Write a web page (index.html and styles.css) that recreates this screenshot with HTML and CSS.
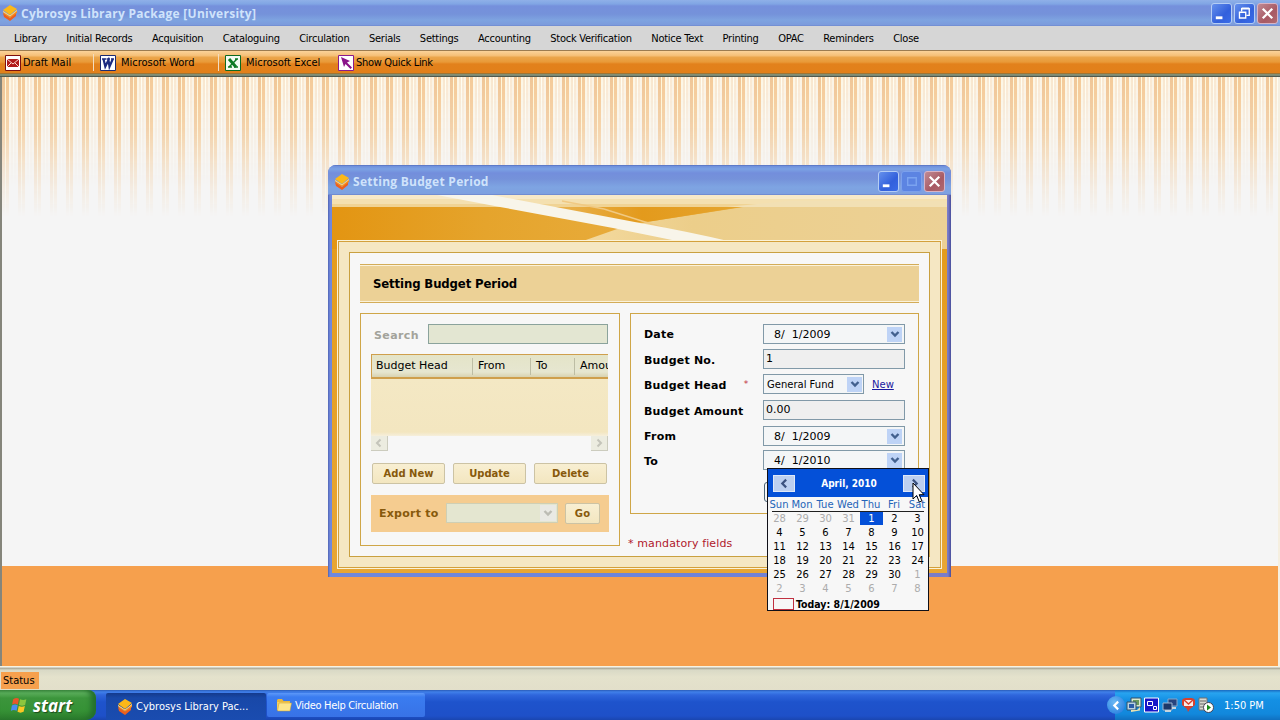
FILE: index.html
```html
<!DOCTYPE html>
<html lang="en">
<head>
    <meta charset="UTF-8">
    <meta name="viewport" content="width=device-width, initial-scale=1.0">
    <title>Cybrosys Library Package [University]</title>
    <link rel="stylesheet" href="styles.css">
</head>
<body>
    <!-- shared icons -->
    <svg class="defs" width="0" height="0">
        <symbol id="logo" viewBox="0 0 16 16">
            <path d="M1 8l7 5 6-6v4l-6 5-6-4z" fill="#ef5f1c"/>
            <path d="M1 6l7 5 7-6v3l-7 5-6-4z" fill="#f58a20"/>
            <path d="M1 6l7 4.500L15 5v1l-7 5.500L1 7z" fill="#ffe08a"/>
            <path d="M1 5l7-5 7 4-7 6z" fill="#fcb818"/>
        </symbol>
        <symbol id="min" viewBox="0 0 20 20"><path d="M4 13h7v3H4z" fill="#fff"/></symbol>
        <symbol id="close" viewBox="0 0 20 20"><path d="M5 5l10 10M15 5L5 15" stroke="#fff" stroke-width="2.4"/></symbol>
        <symbol id="down" viewBox="0 0 10 10"><path d="M1.500 3l3.500 3.500L8.500 3" fill="none" stroke="currentColor" stroke-width="2.400"/></symbol>
        <symbol id="left" viewBox="0 0 10 10"><path d="M6.500 1.500L3 5l3.500 3.500" fill="none" stroke="currentColor" stroke-width="2"/></symbol>
        <symbol id="right" viewBox="0 0 10 10"><path d="M3.500 1.500L7 5 3.500 8.500" fill="none" stroke="currentColor" stroke-width="2"/></symbol>
    </svg>

    <div class="screen">
        <div class="titlebar">
            <svg class="logo"><use href="#logo"/></svg>
            <span class="caption">Cybrosys Library Package [University]</span>
            <div class="window-btns">
                <span class="wbtn"><svg><use href="#min"/></svg></span>
                <span class="wbtn"><svg viewBox="0 0 20 20"><path d="M7 8V5h8v7h-3M7 4.500h8" fill="none" stroke="#fff" stroke-width="1.400"/><path d="M4.700 8.700h6.600v6H4.700zM4.700 8.500h6.600" fill="none" stroke="#fff" stroke-width="1.400"/></svg></span>
                <span class="wbtn wbtn-close"><svg><use href="#close"/></svg></span>
            </div>
        </div>
        <div class="menu">
            <span>Library</span>
            <span>Initial Records</span>
            <span>Acquisition</span>
            <span>Cataloguing</span>
            <span>Circulation</span>
            <span>Serials</span>
            <span>Settings</span>
            <span>Accounting</span>
            <span>Stock Verification</span>
            <span>Notice Text</span>
            <span>Printing</span>
            <span>OPAC</span>
            <span>Reminders</span>
            <span>Close</span>
        </div>
        <div class="toolbar">
            <div class="tool tool-mail">
                <svg viewBox="0 0 16 16"><path d="M.5.500h15v15H.5z" fill="#fff" stroke="#7c1010"/><path d="M2 4h12v8H2z" fill="#b01c1c"/><path d="M2 4l6 5 6-5M2 12l4-4M14 12l-4-4" fill="none" stroke="#fbd9d0"/></svg>
                <span>Draft Mail</span>
            </div>
            <div class="tool tool-word">
                <svg viewBox="0 0 16 16"><path d="M.5.500h15v15H.5z" fill="#fff" stroke="#1c2a70"/><path d="M2 4h4M6.500 4h3.500M11 4h3" stroke="#1c2a80" stroke-width="1.500"/><path d="M3.500 4l1.800 7.500L8.500 5l1 6.500L12.800 4" fill="none" stroke="#1c2a80" stroke-width="2.200"/></svg>
                <span>Microsoft Word</span>
            </div>
            <div class="tool tool-excel">
                <svg viewBox="0 0 16 16"><path d="M.5.500h15v15H.5z" fill="#f3fbf3" stroke="#0d6a20"/><path d="M4 4l7 8" stroke="#0d7a24" stroke-width="3"/><path d="M12 4l-8 8M3 12h4M9 12h4M10 4h3" stroke="#0d7a24" stroke-width="1.500"/></svg>
                <span>Microsoft Excel</span>
            </div>
            <div class="tool">
                <svg viewBox="0 0 16 16"><path d="M.5.500h15v15H.5z" fill="#fff" stroke="#8a1a8a"/><path d="M3 2l9 4-3 1.500 5 5-1.500 1.500-5-5L6 12z" fill="#8a148a"/></svg>
                <span class="tight">Show Quick Link</span>
            </div>
        </div>

        <div class="workspace"></div>

        <div class="statusbar"><span class="status">Status</span></div>

        <div class="taskbar">
            <div class="start">
                <svg viewBox="0 0 18 18">
                    <path d="M3 3q3-2 5.500-.5l-1 5.500q-3-1.500-5.500 0z" fill="#e8562a"/>
                    <path d="M9.500 3q3 1.500 6 0l-1.200 5.500q-3 1.300-5.800 0z" fill="#8cc63e"/>
                    <path d="M1.800 9q3-1.700 5.500-.2l-1 5.200q-3-1.500-5.500.2z" fill="#4a8cf0"/>
                    <path d="M8.300 9.500q3 1.300 5.800 0l-1.200 5.500q-3 1.500-5.800 0z" fill="#fcc724"/>
                </svg>
                <span>start</span>
            </div>
            <div class="task task-active"><svg><use href="#logo"/></svg><span>Cybrosys Library Pac...</span></div>
            <div class="task">
                <svg viewBox="0 0 16 16"><path d="M1 3l1-1h4l1.500 2H14v2H4l-2 7H1z" fill="#e9b93c"/><path d="M1 13V5h12l1 1v7z" fill="#f5cf5a"/><path d="M3 6h12.500L14 14H1.500z" fill="#fce68c" stroke="#c99a2c" stroke-width=".5"/></svg>
                <span class="tight">Video Help Circulation</span>
            </div>
            <div class="tray">
                <span class="tray-toggle"><svg><use href="#left"/></svg></span>
                <div class="tray-icons">
                    <svg viewBox="0 0 16 16"><path d="M5 1h10v9H5z" fill="#d9e8d0" stroke="#31506c"/><path d="M7 3h6v5H7z" fill="#6c9a5c"/><path d="M1 5h9v8H1z" fill="#b9d2e0" stroke="#31506c"/><path d="M3 7h5v4H3z" fill="#2a5ca8"/><path d="M5 15l9-1.500V10l-3 3H5z" fill="#e6e0b0"/></svg>
                    <svg viewBox="0 0 16 16"><path d="M.5 1h14v14H.5z" fill="#1616c8" stroke="#fff"/><path d="M3.500 4.500h5v4h-5zM9.500 9.500h3v3h-3z" fill="none" stroke="#fff"/></svg>
                    <svg viewBox="0 0 16 16"><path d="M6 2h9v7H6z" fill="#27447e" stroke="#8ba6c8"/><path d="M1 6h9v7H1z" fill="#1d3768" stroke="#a0b6d0"/><path d="M3 14h6M10 11h4" stroke="#c8d4dc" stroke-width="2"/></svg>
                    <svg viewBox="0 0 16 16"><path d="M2 3l3-2h7l3 2v5l-5 4-2 3-1-3-5-4z" fill="#d8412e"/><path d="M4 3h9v6H4z" fill="#f8ece8"/><path d="M3 2l5.500 5L14 2" fill="none" stroke="#d8412e" stroke-width="1.500"/></svg>
                    <svg viewBox="0 0 16 16"><path d="M1 1h8v12H1z" fill="#d8d8d0" stroke="#707070"/><path d="M2 4h6M2 7h6M2 10h4" stroke="#666"/><circle cx="10.500" cy="10.500" r="5" fill="#fff" stroke="#445"/><path d="M9 7.500l4 3-4 3z" fill="#188a18"/></svg>
                </div>
                <span class="clock">1:50 PM</span>
            </div>
        </div>

        <!-- budget dialog -->
        <div class="dialog">
            <div class="dialog-title">
                <svg class="logo"><use href="#logo"/></svg>
                <span class="caption">Setting Budget Period</span>
                <div class="window-btns">
                    <span class="wbtn"><svg><use href="#min"/></svg></span>
                    <span class="wbtn wbtn-off"><svg viewBox="0 0 20 20"><path d="M6 6h9v8H6z" fill="none" stroke="#7ba3f0" stroke-width="1.500"/></svg></span>
                    <span class="wbtn wbtn-close"><svg><use href="#close"/></svg></span>
                </div>
            </div>
            <div class="dialog-body">
                <svg class="banner" viewBox="0 0 615 54" preserveAspectRatio="none">
                    <defs>
                        <linearGradient id="gold"><stop offset="0" stop-color="#e39512"/><stop offset=".25" stop-color="#e5a42c"/><stop offset=".5" stop-color="#e8ac3c"/></linearGradient>
                        <linearGradient id="sand"><stop offset="0" stop-color="#f3d99e"/><stop offset=".3" stop-color="#ecce8a"/><stop offset="1" stop-color="#ecd196"/></linearGradient>
                        <linearGradient id="dark"><stop offset="0" stop-color="#ebb95c"/><stop offset=".5" stop-color="#e39a1c"/><stop offset="1" stop-color="#e5a630"/></linearGradient>
                    </defs>
                    <path d="M0 0h615v54H0z" fill="url(#gold)"/>
                    <path d="M251 46l37-13 33-7 90-14h204v42H251z" fill="url(#sand)"/>
                    <path d="M205 11h210l-94 15-24 2z" fill="url(#dark)"/>
                    <path d="M0 0h615v12H0z" fill="#f0d394"/>
                    <path d="M0 0h615v9H0z" fill="#f4e0b0"/>
                    <path d="M0 0h615v4H0z" fill="#f8e9c8"/>
                    <path d="M395 12l60-6h160v6z" fill="#f2e0b4"/>
                    <path d="M230 6l42 8 60 19" fill="none" stroke="#f0c983" stroke-width="1.500"/>
                    <path d="M105 0h55l148 28q50 9 88 18h-51l-64-13L168 12z" fill="#f8f5ea"/>
                </svg>
                <div class="frame">
                    <div class="page">
                        <div class="heading">Setting Budget Period</div>
                        <div class="columns">
                            <div class="box list-box">
                                <div class="search">
                                    <label>Search</label>
                                    <div class="search-input"></div>
                                </div>
                                <div class="list">
                                    <div class="list-head">
                                        <span class="col-head">Budget Head</span>
                                        <span class="col-from">From</span>
                                        <span class="col-to">To</span>
                                        <span class="col-amount">Amount</span>
                                    </div>
                                    <div class="list-body"></div>
                                    <div class="scroll">
                                        <span><svg><use href="#left"/></svg></span>
                                        <span><svg><use href="#right"/></svg></span>
                                    </div>
                                </div>
                                <div class="actions">
                                    <div class="btn">Add New</div>
                                    <div class="btn">Update</div>
                                    <div class="btn">Delete</div>
                                </div>
                                <div class="export">
                                    <label>Export to</label>
                                    <div class="export-select"><span><svg><use href="#down"/></svg></span></div>
                                    <div class="btn btn-go">Go</div>
                                </div>
                            </div>
                            <div class="form-side">
                                <div class="box form">
                                    <label>Date</label>
                                    <div class="field"><span class="date">8/&nbsp; 1/2009</span><i class="arrow"><svg><use href="#down"/></svg></i></div>
                                    <label class="low">Budget No.</label>
                                    <div class="field field-text">1</div>
                                    <label class="low">Budget Head <span class="req">*</span></label>
                                    <div class="field-row">
                                        <div class="field field-combo"><span>General Fund</span><i class="arrow"><svg><use href="#down"/></svg></i></div>
                                        <a class="new">New</a>
                                    </div>
                                    <label class="low">Budget Amount</label>
                                    <div class="field field-text">0.00</div>
                                    <label>From</label>
                                    <div class="field"><span class="date">8/&nbsp; 1/2009</span><i class="arrow"><svg><use href="#down"/></svg></i></div>
                                    <label class="low">To</label>
                                    <div class="field"><span class="date">4/&nbsp; 1/2010</span><i class="arrow"><svg><use href="#down"/></svg></i></div>
                                    <div class="save"></div>
                                </div>
                                <div class="mandatory">* mandatory fields</div>
                            </div>
                        </div>
                    </div>
                </div>
            </div>
        </div>

        <!-- date picker popup -->
        <div class="calendar">
            <div class="cal-head">
                <span class="cal-btn"><svg><use href="#left"/></svg></span>
                <span>April, 2010</span>
                <span class="cal-btn"><svg><use href="#right"/></svg></span>
            </div>
            <div class="cal-days"><span>Sun</span><span>Mon</span><span>Tue</span><span>Wed</span><span>Thu</span><span>Fri</span><span>Sat</span></div>
            <div class="cal-grid">
                <span class="off">28</span><span class="off">29</span><span class="off">30</span><span class="off">31</span><span class="sel">1</span><span>2</span><span>3</span>
                <span>4</span><span>5</span><span>6</span><span>7</span><span>8</span><span>9</span><span>10</span>
                <span>11</span><span>12</span><span>13</span><span>14</span><span>15</span><span>16</span><span>17</span>
                <span>18</span><span>19</span><span>20</span><span>21</span><span>22</span><span>23</span><span>24</span>
                <span>25</span><span>26</span><span>27</span><span>28</span><span>29</span><span>30</span><span class="off">1</span>
                <span class="off">2</span><span class="off">3</span><span class="off">4</span><span class="off">5</span><span class="off">6</span><span class="off">7</span><span class="off">8</span>
            </div>
            <div class="cal-today"><i></i>Today: 8/1/2009</div>
        </div>

        <svg class="cursor" viewBox="0 0 13 21"><path d="M1 1v16l3.700-3.500L7.300 20l2.600-1.100L7.200 12.700H12z" fill="#fff" stroke="#000"/></svg>
    </div>
</body>
</html>
```

FILE: styles.css
```css
* {
    box-sizing: border-box;
}
body {
    margin: 0;
    font-family: "DejaVu Sans Condensed", "DejaVu Sans", sans-serif;
    font-size: 11px;
    color: #000;
}
.defs {
    position: absolute;
}
.screen {
    position: relative;
    width: 1280px;
    height: 720px;
    overflow: hidden;
    display: flex;
    flex-direction: column;
    white-space: nowrap;
    background: #f5f5f5;
}
.tight {
    letter-spacing: -0.3px;
}

/* main window */
.titlebar {
    height: 26px;
    flex: none;
    display: flex;
    align-items: center;
    padding: 0 2px 0 2px;
    background: linear-gradient(#8fb0e8 0, #80a5e4 4px, #7590dc 6px, #7592da 14px, #7ea3e0 20px, #7c9bdc 25px, #6a84cc 26px);
}
.logo {
    width: 16px;
    height: 16px;
    flex: none;
}
.caption {
    margin-left: 3px;
    font-family: "Open Sans", "Noto Sans", sans-serif;
    font-weight: bold;
    font-size: 12px;
    letter-spacing: 0.27px;
    color: #cfe3fb;
}
.window-btns {
    margin-left: auto;
    display: flex;
    gap: 2px;
}
.wbtn {
    width: 21px;
    height: 21px;
    border: 1px solid #b4cdf5;
    border-radius: 3px;
    background: linear-gradient(135deg, #6590ec, #3260dc 60%, #3a6ce8);
}
.wbtn svg {
    display: block;
    width: 19px;
    height: 19px;
}
.wbtn-close {
    border-color: #d9b3c4;
    background: linear-gradient(135deg, #c08a94, #a85a64 60%, #b06a70);
}
.wbtn-off {
    border-color: #7ba0ec;
    background: #5c84e2;
}
.menu {
    height: 24px;
    flex: none;
    display: flex;
    align-items: center;
    gap: 19.500px;
    padding-left: 14px;
    letter-spacing: -0.25px;
    background: #d6d6d6;
}
.toolbar {
    height: 27px;
    flex: none;
    display: flex;
    padding: 3px 0 0 5px;
    border-top: 1px solid #9c7c50;
    background: linear-gradient(#fbd39a 0, #f5be74 5px, #eba64c 6px, #e99a38 11px, #e2811c 13px, #e2801a 22px, #5c6a50 23px, #a9b496 24px, #4e5a50 25px);
}
.tool {
    height: 17px;
    display: flex;
    align-items: center;
    gap: 2px;
}
.tool svg {
    width: 16px;
    height: 16px;
}
.tool-mail {
    width: 89px;
    border-right: 1px solid #f3ddc0;
}
.tool-word {
    width: 125px;
    padding-left: 6px;
    gap: 5px;
    border-right: 1px solid #f3ddc0;
}
.tool-excel {
    width: 119px;
    padding-left: 6px;
    gap: 5px;
}
.workspace {
    position: relative;
    flex: 1;
    border-left: 2px solid #85857b;
    border-right: 2px solid #f5efe0;
    background: linear-gradient(#f5f5f5 489px, #f6a04d 489px);
}
/* fading curtain: tan pairs over short cream stripes */
.workspace::before,
.workspace::after {
    content: "";
    position: absolute;
    left: 0;
    right: 0;
    top: 0;
    height: 140px;
}
.workspace::before {
    background: repeating-linear-gradient(90deg, #faecd4 0 7px, #fdf6e4 7px 9px, #f9e6cc 9px 11px, #fffdf0 11px 12px, #fae8d0 12px 14px, #fbf3e4 14px 16px);
    mask-image: linear-gradient(#000, rgba(0, 0, 0, 0.5) 45px, transparent 110px);
}
.workspace::after {
    background: repeating-linear-gradient(90deg, #f0c697 0 3px, #fff7da 3px 4px, #f4ca98 4px 7px, transparent 7px 16px);
    mask-image: linear-gradient(#000, rgba(0, 0, 0, 0.75) 50px, rgba(0, 0, 0, 0.35) 90px, transparent 140px);
}
.statusbar {
    height: 24px;
    flex: none;
    padding: 5px 0 1px 1px;
    border-top: 1px solid #f8f4e0;
    background: linear-gradient(#fff 0, #a3a391 1px, #d9d9c6 3px, #e4e2cc 10px, #e2dfca);
}
.status {
    display: flex;
    align-items: center;
    width: 38px;
    height: 17px;
    padding-left: 2px;
    background: #f6a04d;
}

/* taskbar */
.taskbar {
    height: 30px;
    flex: none;
    display: flex;
    color: #fff;
    background: linear-gradient(#2a5cb8 0, #4080ea 2px, #2f66dc 5px, #1e53cc 12px, #1e50c8 26px, #1a46b0);
}
.start {
    width: 96px;
    display: flex;
    align-items: center;
    gap: 4px;
    padding-left: 10px;
    border-radius: 0 8px 10px 0;
    background: linear-gradient(#4c9a4c 0, #5cb05c 3px, #3c953c 8px, #369236 20px, #2c7c2c);
    box-shadow: inset -5px 0 5px #24702c;
    font-family: "Open Sans", sans-serif;
    font-size: 17px;
    font-style: italic;
    font-weight: bold;
    text-shadow: 1px 1px 1px #1c4a1c;
}
.start svg {
    width: 19px;
    height: 19px;
}
.task {
    width: 158px;
    height: 24px;
    margin: 3px 0 0 1px;
    display: flex;
    align-items: center;
    gap: 3px;
    padding-left: 9px;
    border-radius: 2px;
    background: linear-gradient(#5c98f8, #3a7cf0 4px, #3872e6);
}
.task svg {
    width: 16px;
    height: 16px;
}
.task-active {
    width: 160px;
    height: 27px;
    margin-left: 10px;
    padding-left: 11px;
    background: linear-gradient(#143a8c, #1848a8 5px, #1a4cb0);
}
.tray {
    width: 165px;
    margin-left: auto;
    display: flex;
    align-items: center;
    background: linear-gradient(#1a6ac0 0, #28a4f0 3px, #1490e4 10px, #1288dc 24px, #1070c0);
}
.tray-toggle {
    width: 18px;
    height: 18px;
    margin: 0 0 0 -8px;
    display: flex;
    align-items: center;
    justify-content: center;
    border-radius: 9px;
    background: radial-gradient(circle at 40% 35%, #6ab8f4, #1c74dc);
}
.tray-toggle svg {
    width: 11px;
    height: 11px;
}
.tray-icons {
    display: flex;
    gap: 2px;
    margin-left: 1px;
}
.tray-icons svg {
    width: 16px;
    height: 16px;
}
.clock {
    margin-left: 10px;
}

/* dialog window */
.dialog {
    position: absolute;
    left: 328px;
    top: 165px;
    width: 623px;
    height: 412px;
    display: flex;
    flex-direction: column;
    padding: 0 4px 4px;
    border-radius: 8px 8px 0 0;
    background: linear-gradient(90deg, #5064b4 0, #7088dc 2px, #6c84dc 50%, #7a7cc8 620px, #484e9c);
}
.dialog-title {
    height: 30px;
    flex: none;
    display: flex;
    align-items: center;
    margin: 0 -4px;
    padding: 3px 6px 0;
    border-radius: 8px 8px 0 0;
    background: linear-gradient(#4c66b4 0, #6f8fdc 1px, #7ba2e4 4px, #738edc 8px, #7592da 14px, #7ea4e2 22px, #7ea0e0 29px, #6478c4);
}
.dialog-body {
    position: relative;
    flex: 1;
    padding: 46px 6px 5px 6px;
    background: linear-gradient(#e39a1a, #e8a634);
}
.banner {
    position: absolute;
    left: 0;
    top: 0;
    width: 100%;
    height: 54px;
}
.frame {
    position: relative;
    height: 327px;
    padding: 10px;
    border: 1px solid #d3a03c;
    outline: 1px solid #fbf3d8;
    background: #f5e7c3;
}
.page {
    height: 305px;
    padding: 11px 10px;
    border: 1px solid #c9a040;
    background: #f7f7f7;
}
.heading {
    height: 39px;
    display: flex;
    align-items: center;
    padding-left: 13px;
    border-top: 1px solid #d3ac58;
    border-bottom: 1px solid #d3ac58;
    background: #ecd196;
    box-shadow: inset 0 1px #fbf2da, inset 0 -1px #fbf2da;
    font-size: 13px;
    font-weight: bold;
    letter-spacing: -0.12px;
}
.columns {
    display: flex;
    gap: 10px;
    margin-top: 10px;
    font-family: "DejaVu Sans", sans-serif;
}
.box {
    border: 1px solid #cfa648;
}
.list-box {
    width: 260px;
    height: 233px;
    padding: 10px 10px;
}
.search {
    display: flex;
    align-items: center;
    padding-left: 3px;
    color: #a3a39b;
    font-weight: bold;
    letter-spacing: 0.4px;
}
.search label {
    width: 54px;
    padding-top: 2px;
}
.search-input {
    width: 180px;
    height: 20px;
    border: 1px solid #8ba39c;
    background: #e3e6d2;
}
.list {
    width: 237px;
    margin-top: 10px;
}
.list-head {
    height: 25px;
    display: flex;
    align-items: center;
    overflow: hidden;
    border: 1px solid #cf9f4c;
    border-width: 1px 0 2px 1px;
    background: linear-gradient(#e4e4c8, #e6e6d0 17px, #d8d2b0);
}
.list-head span {
    height: 17px;
    padding: 1px 0 0 5px;
    flex: none;
    border-right: 1px solid #bdbda4;
}
.list-head .col-head { width: 101px; padding-left: 4px; }
.list-head .col-from { width: 58px; }
.list-head .col-to { width: 44px; }
.list-head .col-amount { border: 0; }
.list-body {
    height: 57px;
    background: linear-gradient(#f4e8c4, #f3e6c0 53px, #f6efdc);
}
.scroll {
    height: 16px;
    display: flex;
    justify-content: space-between;
    color: #c4c4ba;
}
.scroll span {
    width: 17px;
    height: 15px;
    display: flex;
    align-items: center;
    justify-content: center;
    border-right: 1px solid #ccccbe;
    border-bottom: 1px solid #ccccbe;
    background: #ecece0;
}
.scroll svg,
.export-select svg,
.arrow svg {
    width: 10px;
    height: 10px;
}
.actions {
    display: flex;
    gap: 8px;
    margin: 11px 0 0 1px;
}
.btn {
    width: 73px;
    height: 21px;
    display: flex;
    align-items: center;
    justify-content: center;
    border: 1px solid #ccc3a4;
    border-radius: 2px;
    background: linear-gradient(#f8efd2, #f3e6c0);
    font-size: 10px;
    font-weight: bold;
    color: #87590c;
}
.export {
    height: 37px;
    width: 238px;
    display: flex;
    align-items: center;
    margin-top: 11px;
    padding-left: 8px;
    background: #f5cc90;
    font-weight: bold;
    letter-spacing: 0.25px;
    color: #87590c;
}
.export label {
    width: 67px;
}
.export-select {
    width: 112px;
    height: 20px;
    display: flex;
    justify-content: flex-end;
    margin-top: -1px;
    padding: 1px;
    border: 1px solid #cfcfb4;
    background: #e4e6d0;
}
.export-select span {
    width: 16px;
    display: flex;
    align-items: center;
    justify-content: center;
    background: #e9e9e4;
    color: #bcbcb4;
}
.btn-go {
    width: 35px;
    margin-left: 7px;
}
.form {
    width: 289px;
    height: 201px;
    display: grid;
    grid-template-columns: 119px 142px;
    grid-template-rows: 25px 25px 26px 26px 24px 32px 20px;
    align-items: start;
    padding: 10px 0 0 13px;
}
.form label {
    padding-top: 4px;
    font-weight: bold;
    letter-spacing: 0.2px;
}
.form label.low {
    padding-top: 5px;
}
.req {
    margin-left: 13px;
    font-size: 9px;
    font-weight: normal;
    line-height: 1;
    color: #c03040;
    vertical-align: 2px;
}
.field {
    width: 142px;
    height: 20px;
    display: flex;
    align-items: center;
    justify-content: space-between;
    padding: 0 2px 0 3px;
    border: 1px solid #8199a8;
    background: #f4f6f7;
}
.field-text {
    padding: 0 2px 2px;
    background: #efefef;
}
.date {
    padding-left: 7px;
}
.field-row {
    display: flex;
    align-items: center;
    gap: 8px;
}
.field-combo {
    width: 101px;
    font-size: 10px;
    padding-right: 1px;
}
.arrow {
    width: 15px;
    height: 15px;
    display: flex;
    align-items: center;
    justify-content: center;
    background: #bed3f6;
    color: #42608e;
}
.new {
    font-size: 10px;
    color: #1a1aa0;
    text-decoration: underline;
}
.save {
    grid-column: 2;
    width: 80px;
    height: 20px;
    margin-left: 1px;
    border: 1px solid #4c6478;
    border-radius: 3px;
}
.mandatory {
    margin: 23px 0 0 -2px;
    letter-spacing: 0.12px;
    color: #b0182c;
}

/* calendar popup */
.calendar {
    position: absolute;
    left: 767px;
    top: 468px;
    width: 162px;
    height: 143px;
    border: 1px solid #101018;
    background: #f7f7f7;
    font-family: "DejaVu Sans", sans-serif;
    font-size: 10px;
}
.cal-head {
    height: 28px;
    display: flex;
    align-items: center;
    justify-content: space-between;
    padding: 0 3px 0 5px;
    background: #0450d8;
    color: #fff;
    font-family: "DejaVu Sans Condensed", sans-serif;
    font-weight: bold;
}
.cal-btn {
    width: 22px;
    height: 17px;
    display: flex;
    align-items: center;
    justify-content: center;
    border: 1px solid #dfe8f8;
    background: #bccff0;
    color: #3c5280;
}
.cal-btn svg {
    width: 11px;
    height: 11px;
}
.cal-days {
    height: 15px;
    margin: 0 4px;
    display: grid;
    grid-template-columns: repeat(7, 23px);
    align-items: center;
    justify-content: center;
    text-align: center;
    border-bottom: 1px solid #202020;
    color: #2464b8;
}
.cal-grid {
    display: grid;
    grid-template-columns: repeat(7, 23px);
    grid-auto-rows: 14px;
    line-height: 14px;
    text-align: center;
}
.off {
    color: #acacac;
}
.sel {
    height: 13px;
    background: #0450d8;
    color: #fff;
}
.cal-today {
    display: flex;
    align-items: center;
    gap: 2px;
    height: 15px;
    padding-left: 5px;
    font-family: "DejaVu Sans Condensed", sans-serif;
    font-size: 10.500px;
    font-weight: bold;
}
.cal-today i {
    width: 21px;
    height: 12px;
    border: 1px solid #c03040;
}
.cursor {
    position: absolute;
    left: 912px;
    top: 482px;
    width: 13px;
    height: 21px;
}
```
